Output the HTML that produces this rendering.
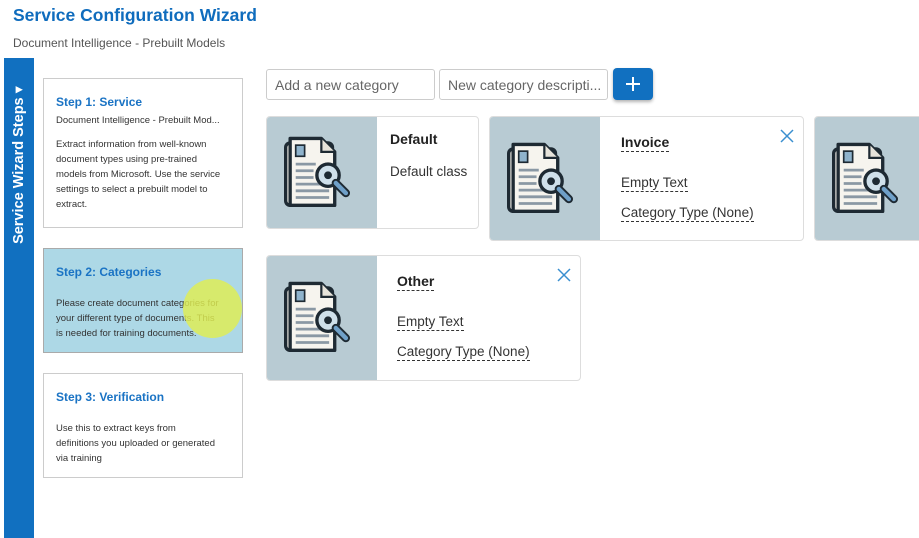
<!DOCTYPE html><html><head><meta charset="utf-8"><style>
*{box-sizing:border-box;margin:0;padding:0}
body{width:919px;height:538px;overflow:hidden;background:#fff;font-family:"Liberation Sans","DejaVu Sans",sans-serif;position:relative;color:#333}
.a{position:absolute}
h1{position:absolute;left:13px;top:5px;font-size:17.5px;font-weight:bold;color:#0f6cbd}
.sub{left:13px;top:36px;font-size:12px;color:#555}
.strip{left:4px;top:58px;width:30px;height:480px;background:#1170c0}
.vt{left:4px;top:70px;width:30px;height:190px}
.vt span{position:absolute;left:50%;top:50%;transform:translate(-50%,-50%) rotate(-90deg);white-space:nowrap;color:#fff;font-weight:bold;font-size:14.5px}
.step{position:absolute;left:43px;width:200px;border:1px solid #ccc;background:#fff;padding:0 12px}
.step h3{font-size:12px;color:#1a73c4;font-weight:bold;margin-top:16px}
.step p{font-size:9.5px;line-height:15px;color:#333;white-space:nowrap}
.inp{position:absolute;top:69px;height:31px;border:1px solid #ccc;border-radius:3px;font-size:14px;color:#666;padding:7px 8px;white-space:nowrap;overflow:hidden}
.btn{left:613px;top:68px;width:40px;height:32px;background:#1170c0;border-radius:4px;box-shadow:0 2px 3px rgba(0,0,0,.3)}
.card{position:absolute;border:1px solid #ddd;border-radius:4px;background:#fff;overflow:hidden}
.img{position:absolute;left:0;top:0;bottom:0;width:110px;background:#b8cbd3}
.img svg{position:absolute;left:16px;top:50%;margin-top:-39px}
.t{position:absolute;font-size:14px;font-weight:bold;color:#222}
.d{position:absolute;font-size:13.5px;color:#333;white-space:nowrap}
.u{border-bottom:1px dashed #333;padding-bottom:1px}
.x{position:absolute}
</style></head><body>
<h1>Service Configuration Wizard</h1>
<div class="a sub">Document Intelligence - Prebuilt Models</div>
<div class="a strip"></div>
<div class="a vt"><span>Service Wizard Steps ▾</span></div>
<div class="step" style="top:78px;height:150px"><h3>Step 1: Service</h3><p style="margin-top:4px">Document Intelligence - Prebuilt Mod...</p><p style="margin-top:9px">Extract information from well-known<br>document types using pre-trained<br>models from Microsoft. Use the service<br>settings to select a prebuilt model to<br>extract.</p></div>
<div class="step" style="top:248px;height:105px;background:#add8e6;border-color:#aaa"><h3>Step 2: Categories</h3><p style="margin-top:17px">Please create document categories for<br>your different type of documents. This<br>is needed for training documents.</p></div>
<div class="a" style="left:183px;top:279px;width:59px;height:59px;border-radius:50%;background:rgba(225,238,80,.82)"></div>
<div class="step" style="top:373px;height:105px"><h3>Step 3: Verification</h3><p style="margin-top:17px">Use this to extract keys from<br>definitions you uploaded or generated<br>via training</p></div>
<div class="inp" style="left:266px;width:169px">Add a new category</div>
<div class="inp" style="left:439px;width:169px">New category descripti...</div>
<div class="a btn"><svg width="40" height="32"><path d="M20 9v14M13 16h14" stroke="#fff" stroke-width="2"/></svg></div>
<div class="card" style="left:266px;top:116px;width:213px;height:113px"><div class="img"><svg width="70" height="78" viewBox="0 0 62 70"><rect x="2" y="8" width="42" height="56" rx="4" fill="#f3f1ea" stroke="#1e2a33" stroke-width="3"/><path d="M6 4h28l12 12v48H6z" fill="#f6f4ee" stroke="#1e2a33" stroke-width="3" stroke-linejoin="round"/><path d="M34 4v12h12" fill="#e6e3da" stroke="#1e2a33" stroke-width="2"/><rect x="11" y="10" width="8" height="10" fill="#8fb3cc" stroke="#1e2a33" stroke-width="1.5"/><g stroke="#8a98a4" stroke-width="2.5"><path d="M11 27h18M11 33h16M11 39h16M11 45h30M11 51h30M11 57h30"/></g><circle cx="40" cy="37" r="10" fill="#cfe0ea" stroke="#1e2a33" stroke-width="3"/><circle cx="40" cy="37" r="3.5" fill="#1e2a33"/><path d="M47 44l9 9" stroke="#1e2a33" stroke-width="7.5" stroke-linecap="round"/><path d="M47 44l9 9" stroke="#6fa0c8" stroke-width="4" stroke-linecap="round"/></svg></div>
<div class="t" style="left:123px;top:14px">Default</div><div class="d" style="left:123px;top:47px">Default class</div></div>
<div class="card" style="left:489px;top:116px;width:315px;height:125px"><div class="img"><svg width="70" height="78" viewBox="0 0 62 70"><rect x="2" y="8" width="42" height="56" rx="4" fill="#f3f1ea" stroke="#1e2a33" stroke-width="3"/><path d="M6 4h28l12 12v48H6z" fill="#f6f4ee" stroke="#1e2a33" stroke-width="3" stroke-linejoin="round"/><path d="M34 4v12h12" fill="#e6e3da" stroke="#1e2a33" stroke-width="2"/><rect x="11" y="10" width="8" height="10" fill="#8fb3cc" stroke="#1e2a33" stroke-width="1.5"/><g stroke="#8a98a4" stroke-width="2.5"><path d="M11 27h18M11 33h16M11 39h16M11 45h30M11 51h30M11 57h30"/></g><circle cx="40" cy="37" r="10" fill="#cfe0ea" stroke="#1e2a33" stroke-width="3"/><circle cx="40" cy="37" r="3.5" fill="#1e2a33"/><path d="M47 44l9 9" stroke="#1e2a33" stroke-width="7.5" stroke-linecap="round"/><path d="M47 44l9 9" stroke="#6fa0c8" stroke-width="4" stroke-linecap="round"/></svg></div>
<div class="t u" style="left:131px;top:17px">Invoice</div><div class="d u" style="left:131px;top:58px">Empty Text</div><div class="d u" style="left:131px;top:88px">Category Type (None)</div><svg class="x" style="left:290px;top:12px" width="14" height="14"><path d="M1 1l12 12M13 1L1 13" stroke="#3a8fd0" stroke-width="1.5"/></svg></div>
<div class="card" style="left:814px;top:116px;width:120px;height:125px"><div class="img" style="width:120px"><svg width="70" height="78" viewBox="0 0 62 70"><rect x="2" y="8" width="42" height="56" rx="4" fill="#f3f1ea" stroke="#1e2a33" stroke-width="3"/><path d="M6 4h28l12 12v48H6z" fill="#f6f4ee" stroke="#1e2a33" stroke-width="3" stroke-linejoin="round"/><path d="M34 4v12h12" fill="#e6e3da" stroke="#1e2a33" stroke-width="2"/><rect x="11" y="10" width="8" height="10" fill="#8fb3cc" stroke="#1e2a33" stroke-width="1.5"/><g stroke="#8a98a4" stroke-width="2.5"><path d="M11 27h18M11 33h16M11 39h16M11 45h30M11 51h30M11 57h30"/></g><circle cx="40" cy="37" r="10" fill="#cfe0ea" stroke="#1e2a33" stroke-width="3"/><circle cx="40" cy="37" r="3.5" fill="#1e2a33"/><path d="M47 44l9 9" stroke="#1e2a33" stroke-width="7.5" stroke-linecap="round"/><path d="M47 44l9 9" stroke="#6fa0c8" stroke-width="4" stroke-linecap="round"/></svg></div></div>
<div class="card" style="left:266px;top:255px;width:315px;height:126px"><div class="img"><svg width="70" height="78" viewBox="0 0 62 70"><rect x="2" y="8" width="42" height="56" rx="4" fill="#f3f1ea" stroke="#1e2a33" stroke-width="3"/><path d="M6 4h28l12 12v48H6z" fill="#f6f4ee" stroke="#1e2a33" stroke-width="3" stroke-linejoin="round"/><path d="M34 4v12h12" fill="#e6e3da" stroke="#1e2a33" stroke-width="2"/><rect x="11" y="10" width="8" height="10" fill="#8fb3cc" stroke="#1e2a33" stroke-width="1.5"/><g stroke="#8a98a4" stroke-width="2.5"><path d="M11 27h18M11 33h16M11 39h16M11 45h30M11 51h30M11 57h30"/></g><circle cx="40" cy="37" r="10" fill="#cfe0ea" stroke="#1e2a33" stroke-width="3"/><circle cx="40" cy="37" r="3.5" fill="#1e2a33"/><path d="M47 44l9 9" stroke="#1e2a33" stroke-width="7.5" stroke-linecap="round"/><path d="M47 44l9 9" stroke="#6fa0c8" stroke-width="4" stroke-linecap="round"/></svg></div>
<div class="t u" style="left:130px;top:17px">Other</div><div class="d u" style="left:130px;top:58px">Empty Text</div><div class="d u" style="left:130px;top:88px">Category Type (None)</div><svg class="x" style="left:290px;top:12px" width="14" height="14"><path d="M1 1l12 12M13 1L1 13" stroke="#3a8fd0" stroke-width="1.5"/></svg></div>
</body></html>
